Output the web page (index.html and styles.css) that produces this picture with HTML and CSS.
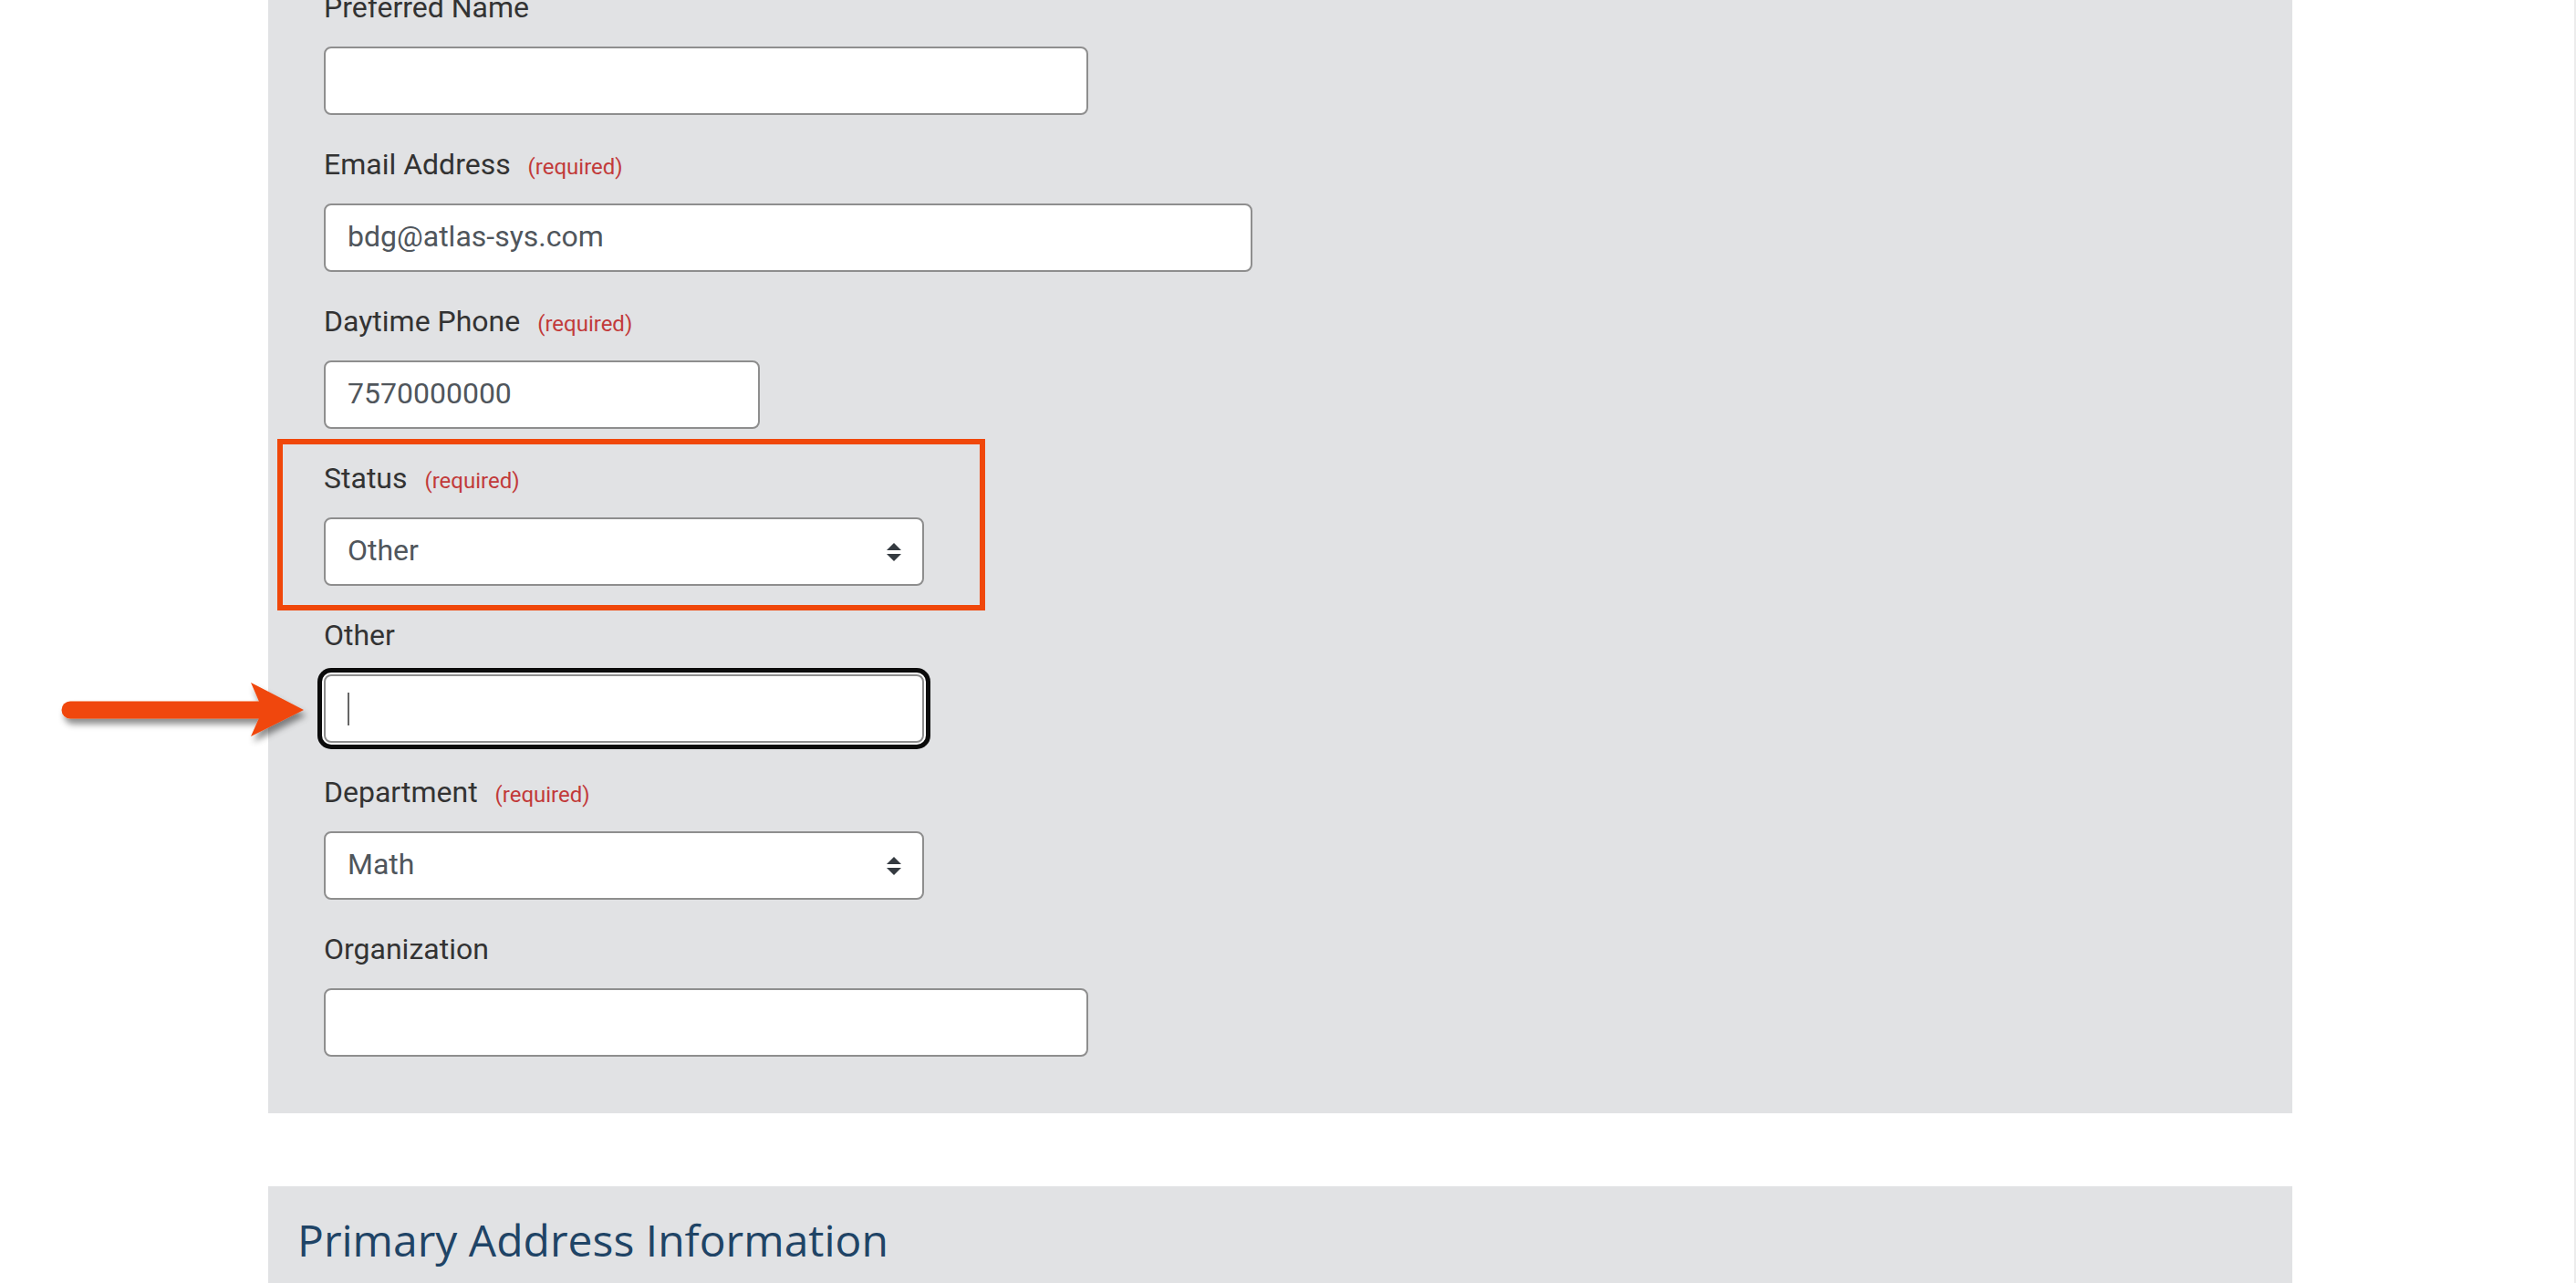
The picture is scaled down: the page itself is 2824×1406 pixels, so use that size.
FILE: index.html
```html
<!DOCTYPE html>
<html lang="en">
<head>
<meta charset="utf-8">
<title>Registration</title>
<link rel="stylesheet" href="styles.css">
</head>
<body>
<main class="page">
  <section class="panel panel-form">
    <div class="group">
      <div class="label">Preferred Name</div>
      <div class="field field-md"></div>
    </div>
    <div class="group">
      <div class="label">Email Address <span class="req">(required)</span></div>
      <div class="field field-lg"><span class="value">bdg@atlas-sys.com</span></div>
    </div>
    <div class="group">
      <div class="label">Daytime Phone <span class="req">(required)</span></div>
      <div class="field field-sm"><span class="value">7570000000</span></div>
    </div>
    <div class="group">
      <div class="label">Status <span class="req">(required)</span></div>
      <div class="field field-sel select"><span class="value">Other</span>
        <svg class="sort" viewBox="0 0 8 10" width="16" height="20"><path d="M4 0L0 4h8zM4 10L0 6h8z" fill="#343a40"/></svg>
      </div>
      <div class="highlight"></div>
    </div>
    <div class="group">
      <div class="label">Other</div>
      <div class="field field-sel focused"><span class="caret"></span></div>
    </div>
    <div class="group">
      <div class="label">Department <span class="req">(required)</span></div>
      <div class="field field-sel select"><span class="value">Math</span>
        <svg class="sort" viewBox="0 0 8 10" width="16" height="20"><path d="M4 0L0 4h8zM4 10L0 6h8z" fill="#343a40"/></svg>
      </div>
    </div>
    <div class="group">
      <div class="label">Organization</div>
      <div class="field field-md"></div>
    </div>
  </section>
  <section class="panel panel-heading">
    <h2 class="section-title">Primary Address Information</h2>
  </section>
</main>
<svg class="callout-arrow" width="300" height="100" viewBox="0 0 300 100">
  <defs>
    <filter id="sh" x="-20%" y="-40%" width="140%" height="180%">
      <feDropShadow dx="3" dy="6" stdDeviation="3.5" flood-color="#000" flood-opacity="0.45"/>
    </filter>
  </defs>
  <g filter="url(#sh)" fill="#f0470a">
    <line x1="27" y1="43" x2="242" y2="43" stroke="#f0470a" stroke-width="19" stroke-linecap="round"/>
    <polygon points="225,13 283,43 225,72 238,43"/>
  </g>
</svg>
</body>
</html>
```
FILE: styles.css
```css
html, body {
  margin: 0;
  padding: 0;
}
body {
  position: relative;
  height: 1406px;
  overflow: hidden;
  background: #fff;
  font-family: Roboto, "Liberation Sans", Arial, sans-serif;
  color: #333;
  box-shadow: inset -2px 0 0 #ececec;
}
.page {
  padding-left: 294px;
}
.panel {
  width: 2219px;
  box-sizing: border-box;
  background: #e1e2e4;
}
.panel-form {
  margin-top: -16px;
  padding: 0 0 62px 61px;
  display: flex;
  flex-direction: column;
  gap: 30px;
}
.group {
  position: relative;
  display: flex;
  flex-direction: column;
  align-items: flex-start;
}
.label {
  height: 48px;
  font-size: 32px;
  line-height: 48px;
  margin-bottom: 19px;
  color: #333;
}
.req {
  font-size: 24px;
  line-height: 24px;
  color: #c23a3a;
  margin-left: 11px;
}
.field {
  box-sizing: border-box;
  height: 75px;
  flex: none;
  border: 2px solid #8e8e8e;
  border-radius: 8px;
  background: #fff;
  padding: 0 24px;
  font-size: 32px;
  color: #50565c;
  display: flex;
  align-items: center;
  justify-content: space-between;
}
.value {
  position: relative;
  top: -2px;
}
.field-md { width: 838px; }
.field-lg { width: 1018px; }
.field-sm { width: 478px; }
.field-sel { width: 658px; }
.select {
  padding-right: 23px;
}
.sort {
  display: block;
  width: 16px;
  height: 20px;
}
.focused {
  box-shadow: 0 0 0 2px #fff, 0 0 0 7px #0b0b0b;
}
.caret {
  display: block;
  width: 2px;
  height: 36px;
  background: #666;
}
.highlight {
  position: absolute;
  top: -19px;
  left: -51px;
  width: 776px;
  height: 188px;
  box-sizing: border-box;
  border: 6px solid #f0470a;
}
.panel-heading {
  margin-top: 80px;
  padding: 30px 32px 120px;
}
.section-title {
  margin: 0;
  font-family: "Open Sans", "Liberation Sans", sans-serif;
  font-weight: 400;
  font-size: 48px;
  line-height: 1.2;
  color: #1f4466;
}
.callout-arrow {
  position: absolute;
  left: 50px;
  top: 735px;
  overflow: visible;
}
```
